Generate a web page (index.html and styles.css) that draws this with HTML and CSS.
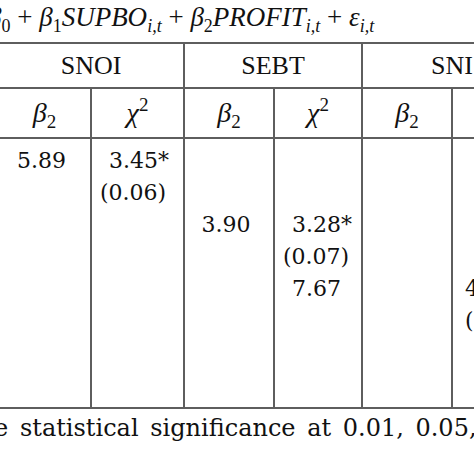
FILE: index.html
```html
<!DOCTYPE html>
<html lang="en">
<head>
    <meta charset="UTF-8">
    <meta name="viewport" content="width=device-width, initial-scale=1.0">
    <title>Regression results</title>
    <link rel="stylesheet" href="styles.css">
</head>
<body>
    <div class="page">
        <p class="formula">
            <i>β</i><sub>0</sub> + <i>β</i><sub>1</sub><i>SUPBO</i><sub><i>i,t</i></sub> + <i>β</i><sub>2</sub><i>PROFIT</i><sub><i>i,t</i></sub> + <i>ε</i><sub><i>i,t</i></sub>
        </p>
        <table class="results">
            <colgroup>
                <col class="c1"><col class="c2"><col class="c3"><col class="c4"><col class="c5"><col class="c6"><col class="c7">
            </colgroup>
            <tr class="group-row">
                <th colspan="2">SNOI</th>
                <th colspan="2">SEBT</th>
                <th colspan="2">SNI</th>
                <th>SNIA</th>
            </tr>
            <tr class="stat-row">
                <th><i>β</i><sub>2</sub></th>
                <th><i>χ</i><sup>2</sup></th>
                <th><i>β</i><sub>2</sub></th>
                <th><i>χ</i><sup>2</sup></th>
                <th><i>β</i><sub>2</sub></th>
                <th><i>χ</i><sup>2</sup></th>
                <th><i>β</i><sub>2</sub></th>
            </tr>
            <tr class="data-row">
                <td class="mid"><div>5.89</div></td>
                <td><div class="ind">3.45*</div><div>(0.06)</div></td>
                <td class="mid"><div class="skip2">3.90</div></td>
                <td><div class="skip2 ind">3.28*</div><div>(0.07)</div><div class="ind">7.67</div></td>
                <td></td>
                <td class="far"><div class="skip4">4.12*</div><div>(0.04)</div></td>
                <td></td>
            </tr>
        </table>
        <p class="note">the statistical significance at 0.01, 0.05, and 0.10 levels, respectively.</p>
    </div>
</body>
</html>
```

FILE: styles.css
```css
html, body {
    margin: 0;
    padding: 0;
    overflow: hidden;
    background: #fff;
}

body {
    width: 474px;
    height: 474px;
    font-family: "DejaVu Serif", serif;
    color: #111;
}

.page {
    margin-left: -3px;
    width: 700px;
}

.formula {
    margin: 0 0 0 -9px;
    height: 42px;
    box-sizing: border-box;
    padding-top: 2px;
    font-family: "Liberation Serif", serif;
    font-size: 27px;
    line-height: 30px;
    white-space: nowrap;
}

.formula sub {
    font-size: 18px;
    line-height: 0;
    vertical-align: -6px;
}

.results {
    border-collapse: collapse;
    table-layout: fixed;
    width: 634px;
    font-size: 22px;
}

.c1, .c2 { width: 93px; }
.c3, .c5, .c6, .c7 { width: 90px; }
.c4 { width: 88px; }

.results th,
.results td {
    border: 2px solid #5e5e5e;
    padding: 0;
}

.results th {
    font-weight: normal;
    text-align: center;
    font-family: "Liberation Serif", serif;
}

.group-row th {
    height: 43px;
    font-size: 26px;
}

.stat-row th {
    height: 48px;
    font-size: 28px;
}

.stat-row sub {
    font-size: 19px;
    line-height: 0;
    vertical-align: -6px;
}

.stat-row sup {
    font-size: 19px;
    line-height: 0;
    vertical-align: 11px;
}

.data-row td {
    height: 262px;
    vertical-align: top;
    padding: 6px 0 0 8px;
    line-height: 32px;
    white-space: nowrap;
}

.data-row td.mid {
    padding: 6px 6px 0 0;
    text-align: center;
}

.data-row td.far {
    padding-left: 12px;
}

.ind {
    padding-left: 9px;
}

.skip2 {
    margin-top: 64px;
}

.skip4 {
    margin-top: 128px;
}

.note {
    margin: 4px 0 0 -28px;
    font-size: 24px;
    line-height: 30px;
    word-spacing: 4px;
    white-space: nowrap;
}
```
